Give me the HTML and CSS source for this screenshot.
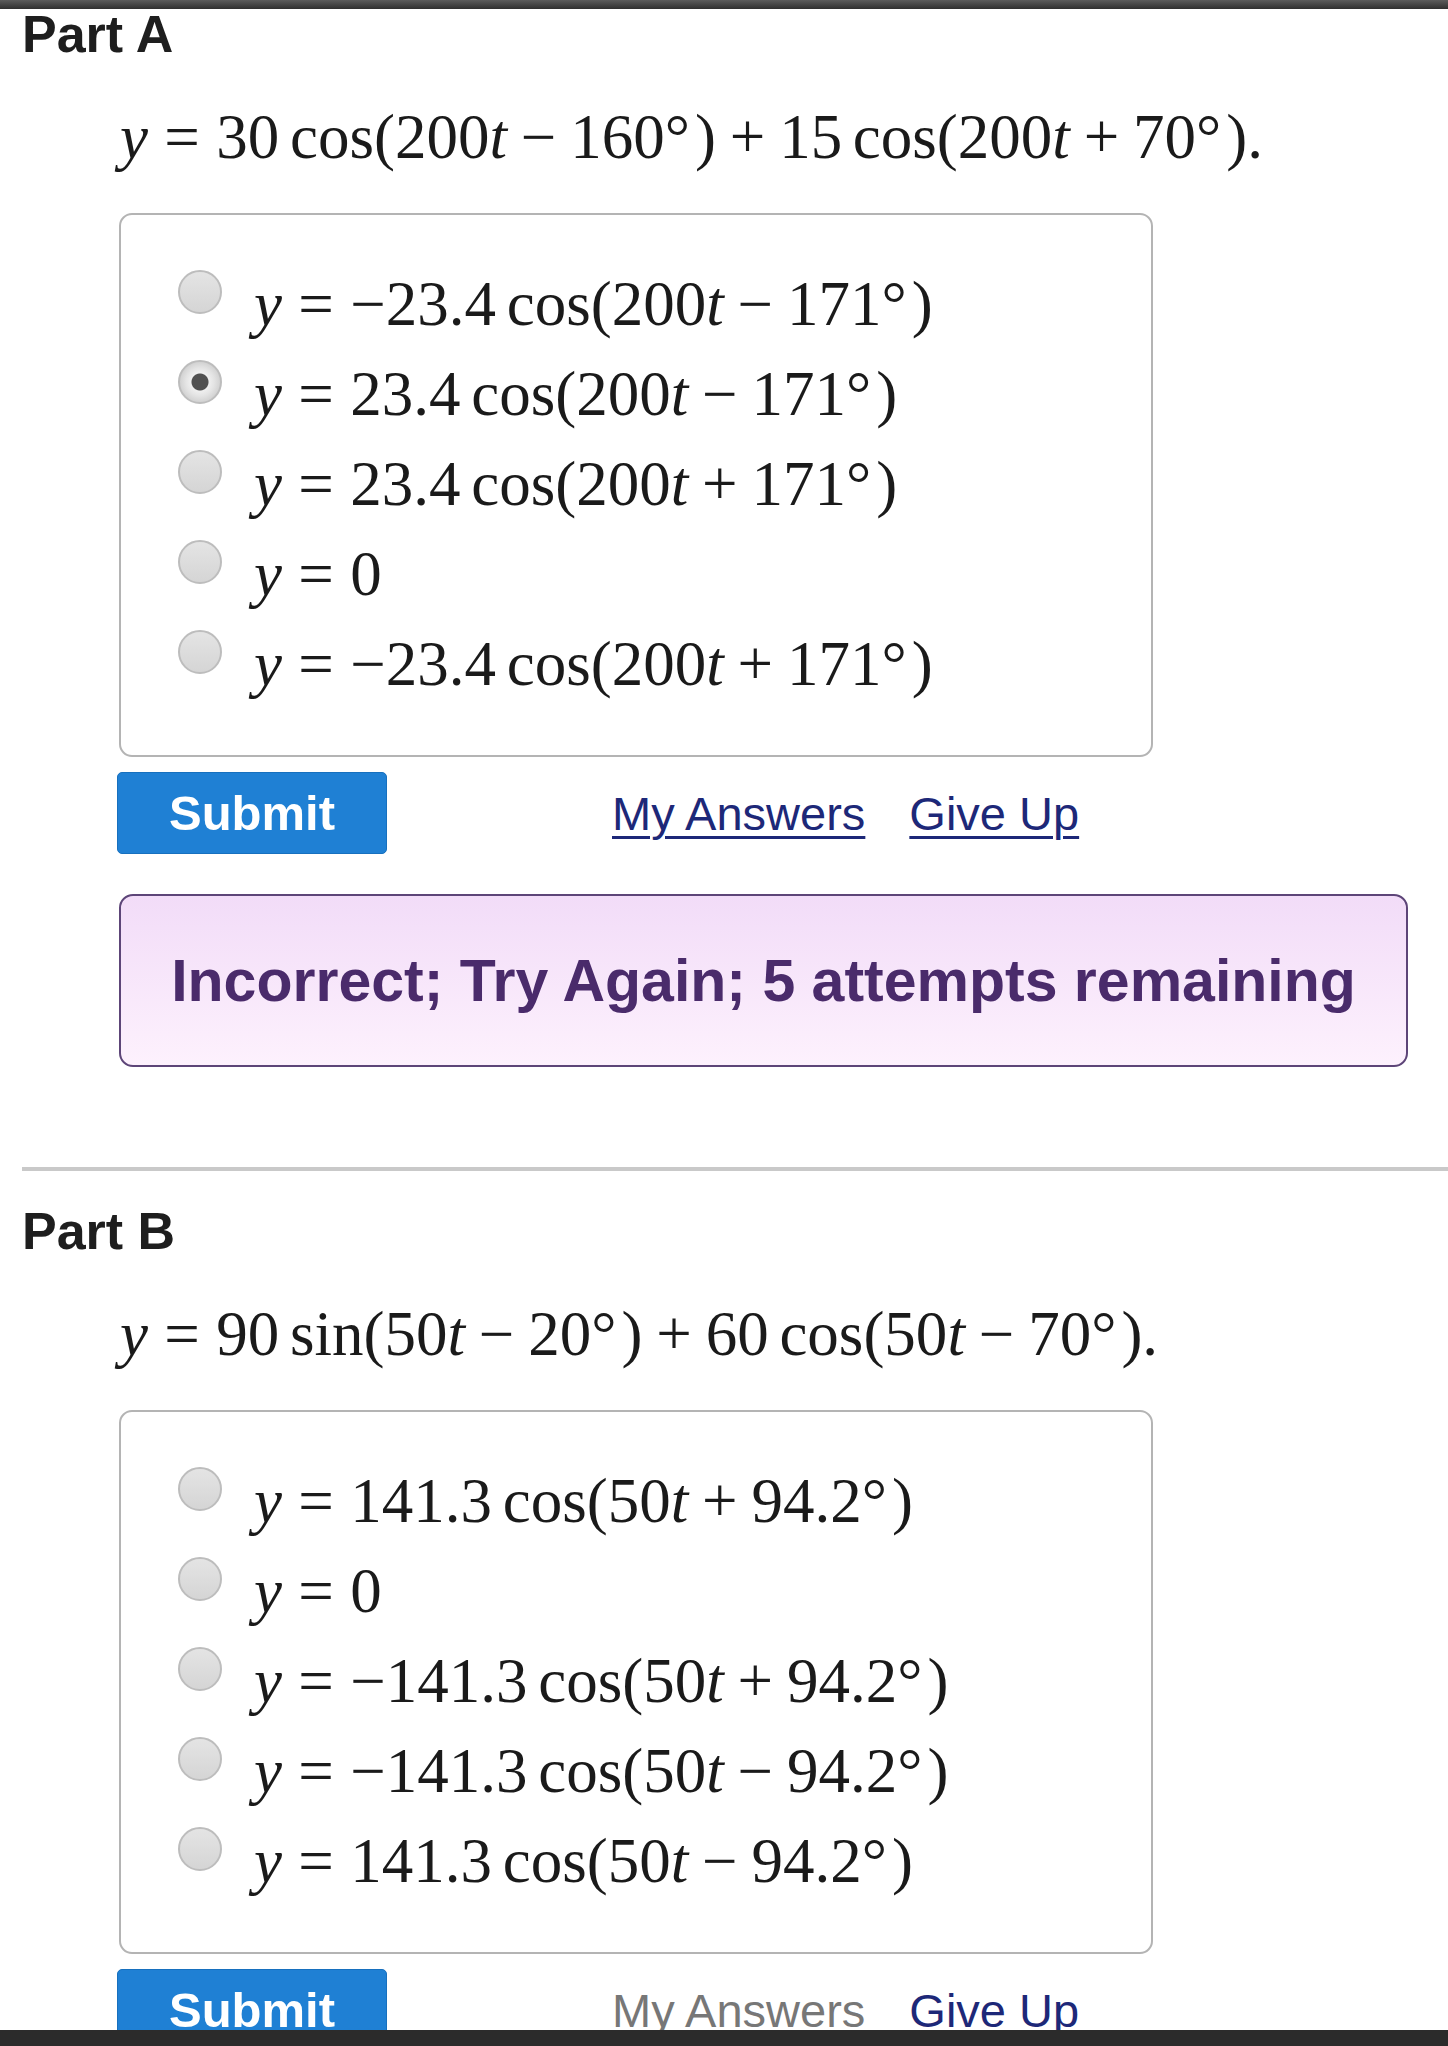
FILE: index.html
```html
<!DOCTYPE html>
<html lang="en">
<head>
  <meta charset="UTF-8">
  <title>Parts A and B</title>
  <link rel="stylesheet" href="styles.css">
</head>
<body>
  <div class="topbar"></div>

  <main class="page">
    <!-- Part A -->
    <section class="part">
      <h3>Part A</h3>
      <div class="prompt math">
        <span class="mi">y</span><span class="rel">=</span>30<span class="fn">cos</span>(200<span class="mi">t</span><span class="bin">&minus;</span>160<span class="deg">&deg;</span>)<span class="bin">+</span>15<span class="fn">cos</span>(200<span class="mi">t</span><span class="bin">+</span>70<span class="deg">&deg;</span>).
      </div>

      <div class="choices">
        <label class="choice"><span class="radio"></span><span class="math"><span class="mi">y</span><span class="rel">=</span>&minus;23.4<span class="fn">cos</span>(200<span class="mi">t</span><span class="bin">&minus;</span>171<span class="deg">&deg;</span>)</span></label>
        <label class="choice"><span class="radio checked"></span><span class="math"><span class="mi">y</span><span class="rel">=</span>23.4<span class="fn">cos</span>(200<span class="mi">t</span><span class="bin">&minus;</span>171<span class="deg">&deg;</span>)</span></label>
        <label class="choice"><span class="radio"></span><span class="math"><span class="mi">y</span><span class="rel">=</span>23.4<span class="fn">cos</span>(200<span class="mi">t</span><span class="bin">+</span>171<span class="deg">&deg;</span>)</span></label>
        <label class="choice"><span class="radio"></span><span class="math"><span class="mi">y</span><span class="rel">=</span>0</span></label>
        <label class="choice"><span class="radio"></span><span class="math"><span class="mi">y</span><span class="rel">=</span>&minus;23.4<span class="fn">cos</span>(200<span class="mi">t</span><span class="bin">+</span>171<span class="deg">&deg;</span>)</span></label>
      </div>

      <div class="actions">
        <button class="submit">Submit</button>
        <div class="links">
          <a href="#">My Answers</a>
          <a href="#">Give Up</a>
        </div>
      </div>

      <div class="feedback">Incorrect; Try Again; 5 attempts remaining</div>
    </section>

    <hr class="divider">

    <!-- Part B -->
    <section class="part">
      <h3>Part B</h3>
      <div class="prompt math">
        <span class="mi">y</span><span class="rel">=</span>90<span class="fn">sin</span>(50<span class="mi">t</span><span class="bin">&minus;</span>20<span class="deg">&deg;</span>)<span class="bin">+</span>60<span class="fn">cos</span>(50<span class="mi">t</span><span class="bin">&minus;</span>70<span class="deg">&deg;</span>).
      </div>

      <div class="choices">
        <label class="choice"><span class="radio"></span><span class="math"><span class="mi">y</span><span class="rel">=</span>141.3<span class="fn">cos</span>(50<span class="mi">t</span><span class="bin">+</span>94.2<span class="deg">&deg;</span>)</span></label>
        <label class="choice"><span class="radio"></span><span class="math"><span class="mi">y</span><span class="rel">=</span>0</span></label>
        <label class="choice"><span class="radio"></span><span class="math"><span class="mi">y</span><span class="rel">=</span>&minus;141.3<span class="fn">cos</span>(50<span class="mi">t</span><span class="bin">+</span>94.2<span class="deg">&deg;</span>)</span></label>
        <label class="choice"><span class="radio"></span><span class="math"><span class="mi">y</span><span class="rel">=</span>&minus;141.3<span class="fn">cos</span>(50<span class="mi">t</span><span class="bin">&minus;</span>94.2<span class="deg">&deg;</span>)</span></label>
        <label class="choice"><span class="radio"></span><span class="math"><span class="mi">y</span><span class="rel">=</span>141.3<span class="fn">cos</span>(50<span class="mi">t</span><span class="bin">&minus;</span>94.2<span class="deg">&deg;</span>)</span></label>
      </div>

      <div class="actions">
        <button class="submit">Submit</button>
        <div class="links">
          <span class="muted">My Answers</span>
          <a href="#">Give Up</a>
        </div>
      </div>
    </section>
  </main>

  <div class="bottombar"></div>
</body>
</html>
```

FILE: styles.css
```css
html, body {
  height: 100%;
}

body {
  margin: 0;
  font-family: "Liberation Sans", Arial, sans-serif;
  color: #222;
  background-color: #fff;
  display: flex;
  flex-direction: column;
  overflow: hidden;
}

.topbar {
  height: 9px;
  flex-shrink: 0;
  background: linear-gradient(#5c5c5c, #2f2f2f);
}

.page {
  flex: 1;
  overflow: hidden;
  padding-left: 22px;
}

h3 {
  margin: 0;
  font-size: 52px;
  line-height: 50px;
  font-weight: bold;
  color: #1e1e1e;
}

/* Math typesetting */
.math {
  font-family: "Liberation Serif", "Times New Roman", serif;
  font-size: 63px;
  color: #1a1a1a;
  white-space: nowrap;
}

.mi {
  font-style: italic;
}

.rel {
  padding: 0 0.26em;
}

.bin {
  padding: 0 0.22em;
}

.fn {
  padding-left: 0.17em;
}

.deg {
  padding-right: 0.08em;
}

.prompt {
  margin: 33px 0 31px 98px;
  line-height: 90px;
}

/* Choices */
.choices {
  margin-left: 97px;
  width: 1034px;
  box-sizing: border-box;
  border: 2px solid #b4b4b4;
  border-radius: 13px;
  padding: 44px 0 46px 57px;
}

.choice {
  display: flex;
  align-items: flex-start;
  height: 90px;
  line-height: 90px;
}

.radio {
  width: 44px;
  height: 44px;
  box-sizing: border-box;
  margin-top: 11px;
  margin-right: 32px;
  flex-shrink: 0;
  border-radius: 50%;
  border: 2px solid #bdbdbd;
  background: linear-gradient(#e4e4e4, #d5d5d5);
}

.radio.checked {
  background: radial-gradient(circle, #505050 0, #505050 8px, #efefef 9px, #e4e4e4 14px, #d2d2d2 20px);
}

/* Actions */
.actions {
  display: flex;
  align-items: center;
  margin: 15px 0 0 95px;
}

.submit {
  width: 270px;
  height: 82px;
  border: 1px solid #1770be;
  border-radius: 5px;
  background-color: #1f80d4;
  color: #fff;
  font-family: "Liberation Sans", Arial, sans-serif;
  font-size: 49px;
  font-weight: bold;
  cursor: pointer;
}

.links {
  display: flex;
  gap: 44px;
  margin-left: 225px;
  font-size: 47px;
}

.links a {
  color: #1d2878;
  text-decoration: underline;
  text-underline-offset: 6px;
  text-decoration-thickness: 3px;
}

.links .muted {
  color: #777;
}

/* Feedback */
.feedback {
  margin: 40px 0 0 97px;
  width: 1289px;
  height: 173px;
  box-sizing: border-box;
  border: 2px solid #5d4578;
  border-radius: 14px;
  background: linear-gradient(#f2dcf8, #fdf1fd);
  display: flex;
  align-items: center;
  justify-content: center;
  font-size: 59px;
  font-weight: bold;
  color: #4a2b6b;
}

.divider {
  margin: 100px 0 35px 0;
  height: 4px;
  border: 0;
  background-color: #c9c9c9;
}

.bottombar {
  height: 16px;
  flex-shrink: 0;
  background-color: #2b2b2b;
}
```
